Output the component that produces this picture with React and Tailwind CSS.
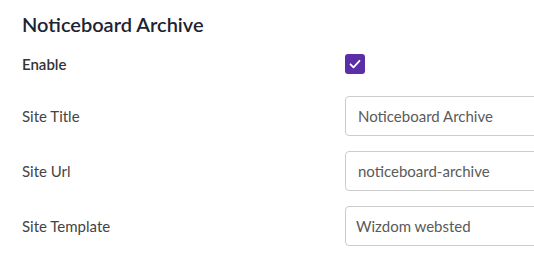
import React from "react";

const fields = [
  { label: "Site Title", value: "Noticeboard Archive", pad: "pl-[12px]" },
  { label: "Site Url", value: "noticeboard-archive", pad: "pl-[12px]" },
  { label: "Site Template", value: "Wizdom websted", pad: "pl-[10px]" },
];

const App = () => (
  <div className="w-[534px] h-[265px] overflow-hidden bg-white font-['Lato',sans-serif] px-[22px] pt-[10px]">
    <h2 className="text-[20px] font-semibold text-[#1c2331] leading-[28px]">Noticeboard Archive</h2>
    <div className="flex items-center mt-[16px] h-[20px]">
      <span className="w-[323px] text-[15px] font-semibold text-[#333]">Enable</span>
      <span className="flex w-[20px] h-[20px] items-center justify-center rounded-[3px] bg-[#5a2ea6]">
        <svg width="14" height="14" viewBox="0 0 14 14" fill="none">
          <path d="M2.5 7.3l3 3L11.5 3.8" stroke="white" strokeWidth="1.8" strokeLinecap="round" strokeLinejoin="round" />
        </svg>
      </span>
    </div>
    <div className="flex flex-col mt-[22px] gap-[15px]">
      {fields.map((f) => (
        <div key={f.label} className="flex items-center">
          <span className="w-[323px] shrink-0 text-[15px] text-[#444]">{f.label}</span>
          <input
            readOnly
            value={f.value}
            className={`w-[240px] shrink-0 h-[40px] rounded-[4px] border border-[#cccccc] ${f.pad} text-[15px] text-[#5a5a5a] outline-none`}
          />
        </div>
      ))}
    </div>
  </div>
);

export default App;
